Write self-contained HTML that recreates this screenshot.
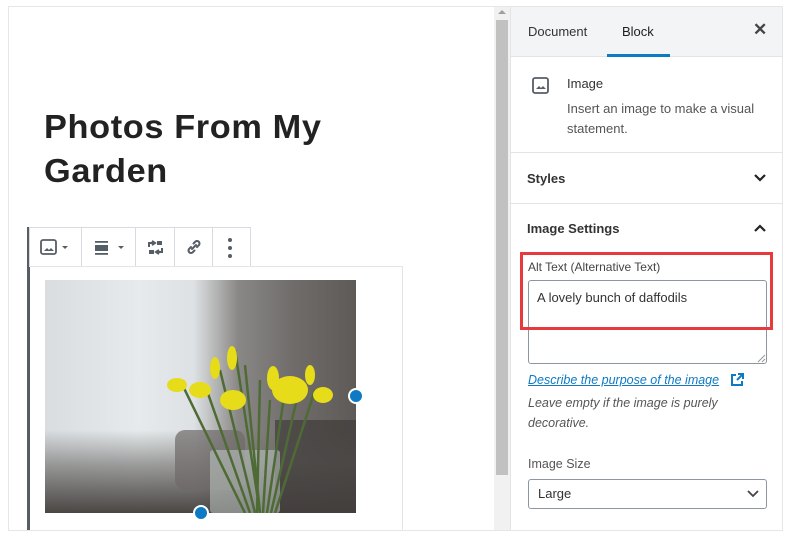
<!DOCTYPE html>
<html><head><style>
*{margin:0;padding:0;box-sizing:border-box}
body{width:790px;height:540px;background:#fff;font-family:"Liberation Sans",sans-serif;position:relative;overflow:hidden;color:#1e1e1e}
.a{position:absolute}
</style></head><body>
<div class="a" style="left:8px;top:6px;width:775px;height:525px;border:1px solid #e4e6e8"></div>
<div class="a" style="left:494px;top:7px;width:16px;height:523px;background:#f1f1f1"></div>
<div class="a" style="left:496px;top:20px;width:12px;height:455px;background:#c1c1c1"></div>
<div class="a" style="left:498px;top:10px;width:0;height:0;border-left:4px solid transparent;border-right:4px solid transparent;border-bottom:4px solid #a0a0a0"></div>
<div class="a" style="left:44px;top:105px;font-size:33px;font-weight:bold;line-height:44px;color:#222;letter-spacing:0.6px;transform:scaleX(1.04);transform-origin:left">Photos From My<br>Garden</div>
<div class="a" style="left:27px;top:227px;width:3px;height:303px;background:#555d66"></div>
<div class="a" style="left:29px;top:227px;width:222px;height:40px;border:1px solid #d7dade;background:#fff;display:flex">
 <div style="width:52px;border-right:1px solid #d7dade;position:relative"><svg class="a" style="left:10px;top:11px" width="30" height="18"><rect x="1" y="1" width="15" height="14" rx="2" fill="none" stroke="#555d66" stroke-width="1.8"/><path d="M4 12l3-3 2 2 2-2 3 3z" fill="#555d66"/><path d="M22 7l3 3 3-3z" fill="#555d66"/></svg></div>
 <div style="width:54px;border-right:1px solid #d7dade;position:relative"><svg class="a" style="left:10px;top:11px" width="34" height="18"><rect x="3" y="2" width="13" height="1.8" fill="#555d66"/><rect x="3" y="6" width="13" height="6" fill="#555d66"/><rect x="3" y="14" width="13" height="1.8" fill="#555d66"/><path d="M26 7l3 3 3-3z" fill="#555d66"/></svg></div>
 <div style="width:39px;border-right:1px solid #d7dade;position:relative"><svg class="a" style="left:10px;top:10px" width="20" height="20"><path d="M3 9V5h6M6 3l3 2-3 2M16 10v4h-6M13 16l-3-2 3-2" fill="none" stroke="#555d66" stroke-width="2"/><rect x="11" y="3" width="5" height="4" fill="#555d66"/><rect x="3" y="12" width="5" height="4" fill="#555d66"/></svg></div>
 <div style="width:38px;border-right:1px solid #d7dade;position:relative"><svg class="a" style="left:9px;top:9px" width="20" height="20"><path d="M8 12l4-4M7 10l-2 2a2.5 2.5 0 003.5 3.5l2-2M13 10l2-2A2.5 2.5 0 0011.5 4.5l-2 2" fill="none" stroke="#555d66" stroke-width="2" stroke-linecap="round"/></svg></div>
 <div style="flex:1;position:relative"><svg class="a" style="left:14px;top:9px" width="6" height="22"><circle cx="3" cy="3" r="2" fill="#555d66"/><circle cx="3" cy="11" r="2" fill="#555d66"/><circle cx="3" cy="19" r="2" fill="#555d66"/></svg></div>
</div>
<div class="a" style="left:29px;top:266px;width:374px;height:264px;border:1px solid #e2e4e7;border-left:none;border-bottom:none"></div>
<div class="a" style="left:45px;top:280px;width:311px;height:233px;overflow:hidden;background:linear-gradient(90deg,#d9dde0 0%,#e6eaec 30%,#dde1e3 48%,#8a8886 62%,#6f6c6a 80%,#5e5a58 100%)">
 <div class="a" style="left:0;top:150px;width:311px;height:83px;background:linear-gradient(180deg,rgba(120,118,116,0) 0%,rgba(110,108,106,.6) 40%,#4a4644 100%)"></div>
 <div class="a" style="left:130px;top:150px;width:70px;height:60px;background:#6e6a68;border-radius:10px;opacity:.7"></div>
 <div class="a" style="left:230px;top:140px;width:81px;height:93px;background:#403c3a;opacity:.7"></div>
 <div class="a" style="left:165px;top:170px;width:70px;height:63px;background:rgba(200,210,205,.5);border-radius:3px"></div>
 <svg class="a" style="left:0;top:0" width="311" height="233">
  <g stroke="#4e6b35" stroke-width="2.5" fill="none">
   <path d="M135 100L200 233M160 105L205 233M175 90L210 233M190 70L215 233M200 85L215 233M225 120L218 233M240 110L222 233M255 105L226 233M270 110L230 233M215 100L212 233"/>
  </g>
  <g fill="#e6dc1a">
   <ellipse cx="132" cy="105" rx="10" ry="7"/><ellipse cx="155" cy="110" rx="11" ry="8"/>
   <ellipse cx="188" cy="120" rx="13" ry="10"/><ellipse cx="245" cy="110" rx="18" ry="14"/>
   <ellipse cx="278" cy="115" rx="10" ry="8"/><ellipse cx="187" cy="78" rx="5" ry="12"/>
   <ellipse cx="170" cy="88" rx="5" ry="11"/><ellipse cx="265" cy="95" rx="5" ry="10"/>
   <ellipse cx="228" cy="98" rx="6" ry="12"/>
  </g>
 </svg>
</div>
<div class="a" style="left:348px;top:388px;width:16px;height:16px;border-radius:50%;background:#0e7ac4;border:2px solid #fff"></div>
<div class="a" style="left:193px;top:505px;width:16px;height:16px;border-radius:50%;background:#0e7ac4;border:2px solid #fff"></div>
<div class="a" style="left:510px;top:7px;width:272px;height:523px;border-left:1px solid #e2e4e7;background:#fff"></div>
<div class="a" style="left:511px;top:7px;width:271px;height:50px;background:#f3f4f5;border-bottom:1px solid #e2e4e7"></div>
<div class="a" style="left:528px;top:24px;font-size:13px;color:#333">Document</div>
<div class="a" style="left:622px;top:24px;font-size:13px;color:#1e1e1e">Block</div>
<div class="a" style="left:607px;top:54px;width:63px;height:3px;background:#0e7ac4"></div>
<div class="a" style="left:753px;top:20px;font-size:17px;font-weight:bold;color:#444">✕</div>
<svg class="a" style="left:531px;top:76px" width="20" height="20"><rect x="2" y="2" width="15" height="15" rx="2" fill="none" stroke="#555d66" stroke-width="1.8"/><path d="M5 13l3-3 2 2 2-2 3 3z" fill="#555d66"/></svg>
<div class="a" style="left:567px;top:76px;font-size:13px;color:#333">Image</div>
<div class="a" style="left:567px;top:99px;font-size:13px;line-height:20px;color:#555;width:210px">Insert an image to make a visual statement.</div>
<div class="a" style="left:511px;top:152px;width:271px;height:1px;background:#e2e4e7"></div>
<div class="a" style="left:527px;top:171px;font-size:13px;font-weight:bold;color:#333">Styles</div>
<svg class="a" style="left:753px;top:172px" width="14" height="12"><path d="M2 3l5 5 5-5" fill="none" stroke="#222" stroke-width="2.2"/></svg>
<div class="a" style="left:511px;top:203px;width:271px;height:1px;background:#e2e4e7"></div>
<div class="a" style="left:527px;top:221px;font-size:13px;font-weight:bold;color:#333">Image Settings</div>
<svg class="a" style="left:753px;top:222px" width="14" height="12"><path d="M2 9l5-5 5 5" fill="none" stroke="#222" stroke-width="2.2"/></svg>
<div class="a" style="left:528px;top:260px;font-size:12px;color:#444">Alt Text (Alternative Text)</div>
<div class="a" style="left:528px;top:280px;width:239px;height:84px;border:1px solid #8d96a0;border-radius:3px"></div>
<svg class="a" style="left:756px;top:353px" width="10" height="10"><path d="M9 2L2 9M9 6L6 9" stroke="#999" stroke-width="1"/></svg>
<div class="a" style="left:537px;top:290px;font-size:13px;color:#333">A lovely bunch of daffodils</div>
<div class="a" style="left:520px;top:252px;width:253px;height:78px;border:3px solid #e63a3f"></div>
<div class="a" style="left:528px;top:373px;font-size:12.5px;font-style:italic;color:#0e7ac4;text-decoration:underline">Describe the purpose of the image</div>
<svg class="a" style="left:730px;top:373px" width="14" height="14"><path d="M6 2H2v10h10V8" fill="none" stroke="#0e7ac4" stroke-width="2"/><path d="M8 1h5v5M13 1L7 7" fill="none" stroke="#0e7ac4" stroke-width="2"/></svg>
<div class="a" style="left:528px;top:393px;font-size:12.5px;font-style:italic;color:#555;line-height:20px;width:230px">Leave empty if the image is purely decorative.</div>
<div class="a" style="left:528px;top:457px;font-size:12.5px;color:#555">Image Size</div>
<div class="a" style="left:528px;top:479px;width:239px;height:30px;border:1px solid #8d96a0;border-radius:3px"></div>
<div class="a" style="left:538px;top:486px;font-size:13px;color:#333">Large</div>
<svg class="a" style="left:746px;top:489px" width="14" height="10"><path d="M2 2l5 5 5-5" fill="none" stroke="#444" stroke-width="1.8"/></svg>
</body></html>
